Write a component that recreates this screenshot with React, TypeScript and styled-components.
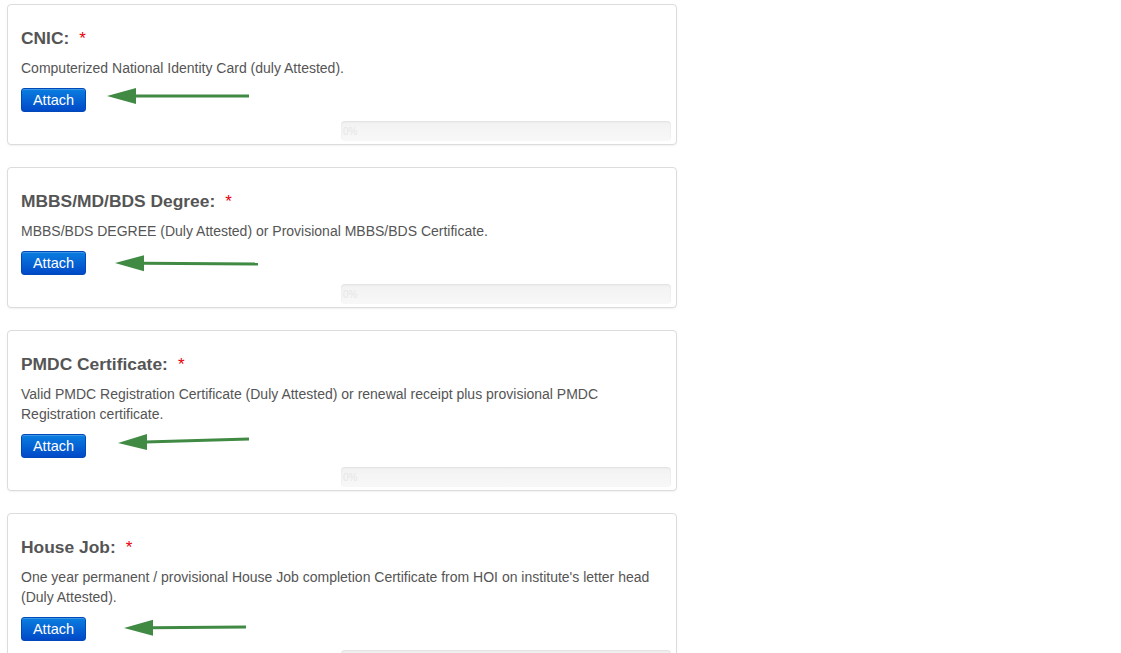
import styled, { createGlobalStyle } from 'styled-components';

const GlobalStyle = createGlobalStyle`
  html, body {
    margin: 0;
    padding: 0;
    background: #fff;
    font-family: 'Liberation Sans', Arial, sans-serif;
  }
`;

type Doc = {
  title: string;
  text: string;
  arrow: { gap: number; tipY: number; endY: number; length: number; top: number };
};

const docs: Doc[] = [
  {
    title: 'CNIC:',
    text: 'Computerized National Identity Card (duly Attested).',
    arrow: { gap: 21, tipY: 10, endY: 10, length: 142, top: -4 },
  },
  {
    title: 'MBBS/MD/BDS Degree:',
    text: 'MBBS/BDS DEGREE (Duly Attested) or Provisional MBBS/BDS Certificate.',
    arrow: { gap: 29, tipY: 10, endY: 11, length: 143, top: 0 },
  },
  {
    title: 'PMDC Certificate:',
    text: 'Valid PMDC Registration Certificate (Duly Attested) or renewal receipt plus provisional PMDC Registration certificate.',
    arrow: { gap: 32, tipY: 10, endY: 6, length: 131, top: -3 },
  },
  {
    title: 'House Job:',
    text: "One year permanent / provisional House Job completion Certificate from HOI on institute's letter head (Duly Attested).",
    arrow: { gap: 38, tipY: 10, endY: 9, length: 122, top: -1 },
  },
];

function Arrow({ tipY, endY, length }: { tipY: number; endY: number; length: number }) {
  const head = 29;
  const slope = (endY - tipY) / length;
  const baseY = tipY + slope * head;
  return (
    <svg width={length} height={20} viewBox={`0 0 ${length} 20`}>
      <line x1={head - 2} y1={baseY} x2={length} y2={endY} stroke="#418a44" strokeWidth={3} />
      <polygon
        points={`0,${tipY} ${head},${baseY - 8} ${head},${baseY + 8}`}
        fill="#418a44"
      />
    </svg>
  );
}

export default function App() {
  return (
    <>
      <GlobalStyle />
      <Page>
        {docs.map((d) => (
          <Card key={d.title}>
            <Title>
              {d.title}
              <Required>*</Required>
            </Title>
            <Description>{d.text}</Description>
            <ActionRow>
              <AttachButton type="button">Attach</AttachButton>
              <ArrowWrap $gap={d.arrow.gap} $top={d.arrow.top}>
                <Arrow tipY={d.arrow.tipY} endY={d.arrow.endY} length={d.arrow.length} />
              </ArrowWrap>
            </ActionRow>
            <Progress>
              <ProgressLabel>0%</ProgressLabel>
            </Progress>
          </Card>
        ))}
      </Page>
    </>
  );
}

const Page = styled.div`
  display: flex;
  flex-direction: column;
  gap: 22px;
  width: 670px;
  padding: 4px 0 0 7px;
`;

const Card = styled.section`
  display: flex;
  flex-direction: column;
  box-sizing: border-box;
  width: 670px;
  padding: 23px 5px 3px 13px;
  border: 1px solid #dcdcdc;
  border-radius: 4px;
  background: #fff;
  box-shadow: 0 1px 2px rgba(0, 0, 0, 0.06);
`;

const Title = styled.h3`
  margin: 0;
  font-size: 17.4px;
  line-height: 20px;
  font-weight: bold;
  color: #555;
`;

const Required = styled.span`
  margin-left: 10px;
  font-size: 17px;
  font-weight: normal;
  color: #e8000b;
`;

const Description = styled.p`
  margin: 9px 0 0;
  font-size: 14px;
  line-height: 20px;
  color: #555;
`;

const ActionRow = styled.div`
  display: flex;
  align-items: center;
  margin-top: 10px;
`;

const AttachButton = styled.button`
  box-sizing: border-box;
  width: 65px;
  height: 24px;
  padding: 0;
  border: 1px solid #0049b8;
  border-radius: 3px;
  background: linear-gradient(#0a7ee0, #0049c8);
  color: #fff;
  font-family: 'Liberation Sans', Arial, sans-serif;
  font-size: 14.5px;
  line-height: 22px;
  box-shadow: inset 0 1px 0 rgba(255, 255, 255, 0.2);
  cursor: pointer;
`;

const ArrowWrap = styled.div<{ $gap: number; $top: number }>`
  display: flex;
  margin-left: ${({ $gap }) => $gap}px;
  position: relative;
  top: ${({ $top }) => $top}px;
`;

const Progress = styled.div`
  display: flex;
  align-items: center;
  align-self: flex-end;
  box-sizing: border-box;
  width: 330px;
  height: 20px;
  margin-top: 9px;
  padding-left: 2px;
  border-radius: 4px;
  background: linear-gradient(#f2f2f2, #f8f8f8);
  box-shadow: inset 0 1px 2px rgba(0, 0, 0, 0.08);
`;

const ProgressLabel = styled.span`
  font-size: 10px;
  color: #e6e6e6;
`;
